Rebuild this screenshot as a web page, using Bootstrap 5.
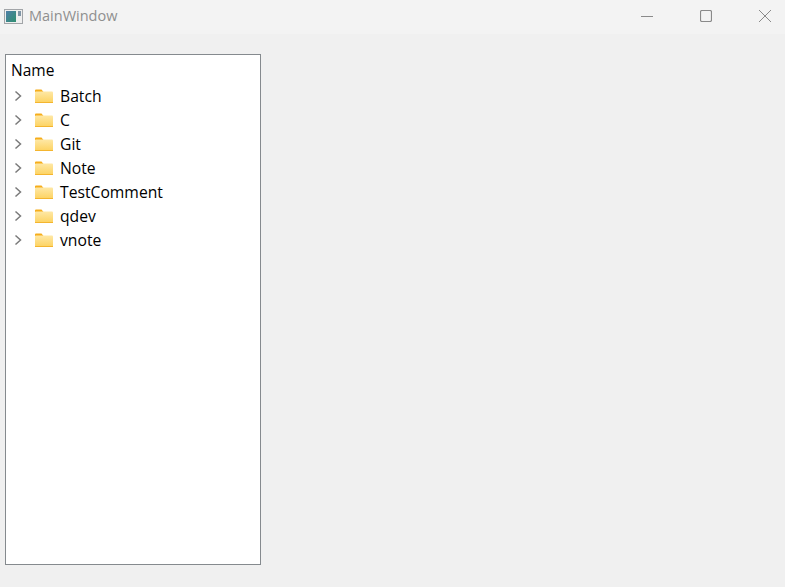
<!DOCTYPE html>
<html lang="en">
<head>
<meta charset="utf-8">
<title>MainWindow</title>
<link href="https://cdn.jsdelivr.net/npm/bootstrap@5.3.0/dist/css/bootstrap.min.css" rel="stylesheet">
<style>
html,body{height:100%;}
body{background:#f0f0f0;font-family:"Open Sans","Noto Sans","Liberation Sans",sans-serif;color:#000;overflow:hidden;}
.win{width:785px;height:587px;}
.titlebar{height:34px;background:#f3f3f3;padding-left:4px;padding-bottom:2px;}
.apptitle{font-size:14.5px;color:#8f8f8f;margin-left:6px;line-height:1;}
.winbtn{width:59px;height:30px;}
.winctl{width:177px;margin-right:-9px;}
.bodyarea{padding:20px 0 0 5px;}
.treebox{width:256px;height:511px;background:#fff;border:1px solid #858a8e;}
.headrow{height:30px;padding:5px 0 0 5px;font-size:15.5px;line-height:20px;}
.treerow{height:24px;font-size:15.7px;line-height:22px;padding-bottom:2px;}
.chev{width:28px;padding-left:8px;}
.foldr{width:20px;margin-right:6px;}
</style>
</head>
<body>
<div class="win d-flex flex-column">
  <div class="titlebar d-flex align-items-center justify-content-between">
    <div class="d-flex align-items-center">
      <svg width="19" height="15" viewBox="0 0 19 15">
        <defs><linearGradient id="ig" x1="0" y1="0" x2="1" y2="1"><stop offset="0" stop-color="#4f7fa8"/><stop offset="1" stop-color="#2f8f70"/></linearGradient></defs>
        <rect x=".5" y=".5" width="18" height="14" fill="#efefef" stroke="#a2a5a8"/>
        <rect x="2" y="2" width="10" height="11" fill="url(#ig)"/>
        <rect x="14" y="2" width="3" height="5" fill="#7f95a6"/>
      </svg>
      <span class="apptitle">MainWindow</span>
    </div>
    <div class="d-flex winctl">
      <div class="winbtn d-flex align-items-center justify-content-center">
        <svg width="12" height="12" viewBox="0 0 12 12"><path d="M0 6.5H12" stroke="#8a8a8a" fill="none"/></svg>
      </div>
      <div class="winbtn d-flex align-items-center justify-content-center">
        <svg width="12" height="12" viewBox="0 0 12 12"><rect x=".5" y=".5" width="11" height="11" rx="1.5" fill="none" stroke="#8a8a8a" stroke-width="1.2"/></svg>
      </div>
      <div class="winbtn d-flex align-items-center justify-content-center">
        <svg width="14" height="14" viewBox="0 0 14 14"><path d="M1 1L13 13M13 1L1 13" stroke="#8a8a8a" fill="none"/></svg>
      </div>
    </div>
  </div>
  <div class="bodyarea">
    <div class="treebox">
      <div class="headrow">Name</div>
      <div id="tree"></div>
    </div>
  </div>
</div>
<script>
var names=["Batch","C","Git","Note","TestComment","qdev","vnote"];
document.getElementById("tree").innerHTML=names.map(function(n){
return '<div class="treerow d-flex align-items-center"><span class="chev d-flex"><svg width="8" height="12" viewBox="0 0 8 12"><path d="M1.5 1.5L6.5 6L1.5 10.5" fill="none" stroke="#7a7a7a" stroke-width="1.5"/></svg></span><span class="foldr d-flex"><svg width="20" height="15" viewBox="0 0 20 15"><defs><linearGradient id="fg" x1="0" y1="0" x2="0" y2="1"><stop offset="0" stop-color="#fee8a6"/><stop offset="1" stop-color="#fdd25f"/></linearGradient></defs><path d="M1 1.5a1 1 0 0 1 1-1h5.5l2 2.5h-8.500z" fill="#f6ad1b"/><rect x="1" y="2.500" width="18" height="11.500" rx="1" fill="url(#fg)"/><rect x="1" y="13" width="18" height="1" fill="#f4b52f"/></svg></span><span>'+n+'</span></div>';
}).join("");
</script>
<script src="https://cdn.jsdelivr.net/npm/bootstrap@5.3.0/dist/js/bootstrap.bundle.min.js"></script>
</body>
</html>
